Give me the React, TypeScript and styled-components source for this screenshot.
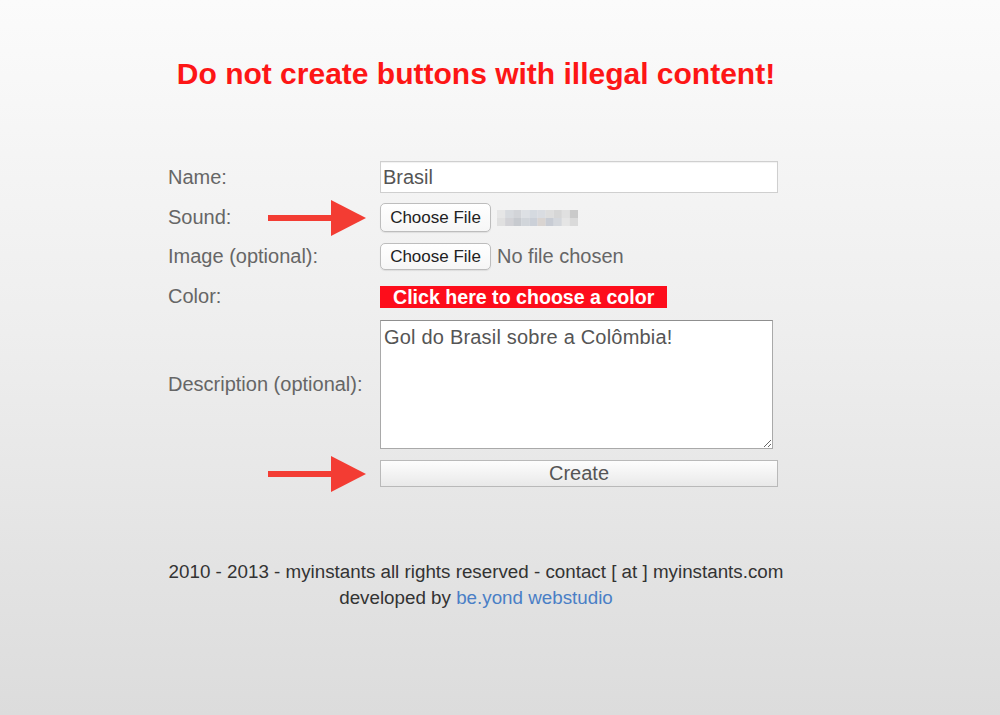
import React from 'react';
import styled, { createGlobalStyle } from 'styled-components';

const GlobalStyle = createGlobalStyle`
  html, body {
    margin: 0;
    padding: 0;
  }
  body {
    font-family: "Liberation Sans", Arial, Helvetica, sans-serif;
    background: linear-gradient(to bottom, #fbfbfb 0%, #ededed 50%, #dcdcdc 100%);
    min-height: 715px;
  }
`;

const Page = styled.div`
  width: 1000px;
  height: 715px;
  box-sizing: border-box;
  padding: 56px 48px 0 0;
  display: flex;
  flex-direction: column;
  align-items: center;
`;

const Column = styled.div`
  width: 616px;
  display: flex;
  flex-direction: column;
  align-items: center;
`;

const Warning = styled.h1`
  margin: 0;
  font-size: 30px;
  line-height: 36px;
  font-weight: bold;
  color: #fd1616;
  text-align: center;
  white-space: nowrap;
`;

const Form = styled.form`
  align-self: flex-start;
  width: 610px;
  margin-top: 69px;
  display: flex;
  flex-direction: column;
`;

const Row = styled.div<{ $gap?: number; $height: number }>`
  position: relative;
  display: grid;
  grid-template-columns: 212px 1fr;
  align-items: center;
  margin-top: ${(p) => p.$gap ?? 0}px;
  height: ${(p) => p.$height}px;
`;

const Label = styled.label`
  font-size: 20px;
  color: #666;
  white-space: nowrap;
`;

const TextInput = styled.input`
  box-sizing: border-box;
  width: 398px;
  height: 32px;
  margin: 0;
  padding: 0 2px;
  border: 1px solid #cfcfcf;
  box-shadow: inset 0 1px 1px rgba(0, 0, 0, 0.06);
  background: #fff;
  font-family: inherit;
  font-size: 20px;
  color: #555;
  outline: none;
`;

const FileRow = styled.div`
  display: flex;
  align-items: center;
  gap: 6px;
`;

const FileButton = styled.button<{ $height: number }>`
  box-sizing: border-box;
  height: ${(p) => p.$height}px;
  width: 111px;
  padding: 0;
  border: 1px solid #bdbdbd;
  border-radius: 5px;
  background: linear-gradient(to bottom, #ffffff, #f6f6f6);
  box-shadow: 0 1px 1px rgba(0, 0, 0, 0.08);
  font-family: inherit;
  font-size: 17px;
  color: #222;
  cursor: pointer;
`;

const FileStatus = styled.span`
  font-size: 20px;
  color: #666;
`;

const ColorPicker = styled.div`
  box-sizing: border-box;
  width: 287px;
  height: 22px;
  padding-left: 13px;
  background: #fd0d1b;
  color: #fff;
  font-size: 19.6px;
  font-weight: bold;
  line-height: 22px;
  white-space: nowrap;
  cursor: pointer;
`;

const TextArea = styled.textarea`
  box-sizing: border-box;
  width: 393px;
  height: 129px;
  margin: 0;
  padding: 5px 3px;
  border: 1px solid #a9a9a9;
  border-top-color: #8f8f8f;
  background: #fff;
  font-family: inherit;
  font-size: 20px;
  line-height: 23px;
  letter-spacing: 0.2px;
  color: #555;
  outline: none;
`;

const CreateButton = styled.button`
  box-sizing: border-box;
  width: 398px;
  height: 27px;
  margin: 0;
  padding: 0;
  border: 1px solid #b9b9b9;
  background: linear-gradient(to bottom, #fdfdfd, #e9e9e9);
  font-family: inherit;
  font-size: 20px;
  color: #555;
  cursor: pointer;
`;

const Arrow = styled.svg`
  position: absolute;
  left: 100px;
  top: 50%;
  margin-top: -19px;
  width: 98px;
  height: 38px;
`;

const Footer = styled.footer`
  margin-top: 72px;
  font-size: 18.8px;
  line-height: 26px;
  color: #333;
  text-align: center;
  white-space: nowrap;
`;

const Link = styled.a`
  color: #4a7fc6;
  text-decoration: none;
`;

const Mosaic = styled.svg`
  width: 81px;
  height: 16px;
`;

const mosaicColors = [
  ['#e6e6e6', '#d7dade', '#d2d4d8', '#dde0e4', '#d5dae0', '#d9dce1', '#dddddd', '#d6d6d6', '#e0e0e0', '#cacaca'],
  ['#e0e0e0', '#d2d2d6', '#c7cacf', '#d1d5da', '#cbd0d8', '#d9d4d1', '#c8ccd4', '#d4d7dc', '#e5e5e5', '#dadada'],
];

const PointerArrow = () => (
  <Arrow viewBox="0 0 98 38">
    <rect x="0" y="16" width="66" height="6" fill="#f33c33" />
    <polygon points="63,1 98,19 63,37" fill="#f33c33" />
  </Arrow>
);

const BlurredName = () => (
  <Mosaic viewBox="0 0 81 16">
    {mosaicColors.map((row, r) =>
      row.map((c, i) => <rect key={`${r}-${i}`} x={i * 8.1} y={r * 8} width="8.2" height="8" fill={c} />)
    )}
  </Mosaic>
);

const App: React.FC = () => {
  return (
    <>
      <GlobalStyle />
      <Page>
        <Column>
          <Warning>Do not create buttons with illegal content!</Warning>

          <Form onSubmit={(e) => e.preventDefault()}>
            <Row $height={32}>
              <Label>Name:</Label>
              <TextInput type="text" defaultValue="Brasil" />
            </Row>

            <Row $gap={10} $height={29}>
              <Label>Sound:</Label>
              <FileRow>
                <FileButton type="button" $height={29}>Choose File</FileButton>
                <BlurredName />
              </FileRow>
              <PointerArrow />
            </Row>

            <Row $gap={11} $height={27}>
              <Label>Image (optional):</Label>
              <FileRow>
                <FileButton type="button" $height={27}>Choose File</FileButton>
                <FileStatus>No file chosen</FileStatus>
              </FileRow>
            </Row>

            <Row $gap={15} $height={22}>
              <Label>Color:</Label>
              <ColorPicker>Click here to choose a color</ColorPicker>
            </Row>

            <Row $gap={13} $height={129}>
              <Label>Description (optional):</Label>
              <TextArea defaultValue="Gol do Brasil sobre a Colômbia!" />
            </Row>

            <Row $gap={11} $height={27}>
              <span />
              <CreateButton type="submit">Create</CreateButton>
              <PointerArrow />
            </Row>
          </Form>

          <Footer>
            2010 - 2013 - myinstants all rights reserved - contact [ at ] myinstants.com
            <br />
            developed by <Link href="#">be.yond webstudio</Link>
          </Footer>
        </Column>
      </Page>
    </>
  );
};

export default App;
